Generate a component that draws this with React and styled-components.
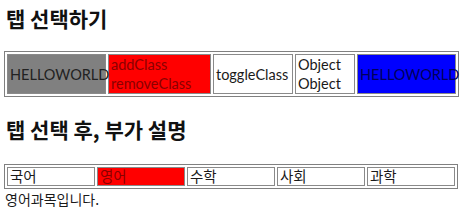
import React, { useState } from 'react';
import styled, { createGlobalStyle } from 'styled-components';

const GlobalStyle = createGlobalStyle`
  * {
    box-sizing: border-box;
  }
  body {
    margin: 0;
    background: #ffffff;
    color: #1a1a1a;
    font-family: Lato, 'Noto Sans CJK KR', sans-serif;
  }
`;

const Page = styled.div`
  padding: 5px 0 0 4px;
`;

const Heading = styled.h1`
  margin: ${props => props.$top || 0}px 0 0 2px;
  font-family: 'Noto Sans CJK KR', sans-serif;
  font-size: 21px;
  line-height: 26px;
  font-weight: 700;
  color: #111111;
`;

const Table = styled.table`
  margin-top: ${props => props.$top}px;
  width: 454px;
  border: 1px solid #808080;
  border-spacing: 2px;
  font-family: Lato, 'Noto Sans CJK KR', sans-serif;
  font-size: ${props => props.$size}px;
  line-height: ${props => props.$line}px;
  table-layout: fixed;
`;

const Cell = styled.td`
  width: ${props => props.$w}px;
  padding: 0 1px 0 2px;
  border: 1px solid #8a8a8a;
  vertical-align: middle;
  text-align: left;
  white-space: nowrap;
  background: ${props => props.$bg || '#ffffff'};
  color: ${props => props.$fg || '#1a1a1a'};
  cursor: pointer;
`;

const Note = styled.p`
  margin: 1px 0 0 1px;
  font-family: 'Noto Sans CJK KR', sans-serif;
  font-size: 14px;
  line-height: 19px;
  color: #1a1a1a;
`;

const subjects = ['국어', '영어', '수학', '사회', '과학'];

export default function App() {
  const [active, setActive] = useState(1);

  return (
    <>
      <GlobalStyle />
      <Page>
        <Heading>탭 선택하기</Heading>
        <Table $top={20} $line={19} $size={14.5}>
          <tbody>
            <tr>
              <Cell $w={99} $bg="#808080" $fg="#222222">HELLOWORLD</Cell>
              <Cell $w={103} $bg="#ff0000" $fg="#8a0000">addClass<br />removeClass</Cell>
              <Cell $w={80}>toggleClass</Cell>
              <Cell $w={60}>Object<br />Object</Cell>
              <Cell $w={99} $bg="#0000ff" $fg="#00005a">HELLOWORLD</Cell>
            </tr>
          </tbody>
        </Table>

        <Heading $top={19}>탭 선택 후, 부가 설명</Heading>
        <Table $top={22} $line={17} $size={14.5}>
          <tbody>
            <tr>
              {subjects.map((s, i) => (
                <Cell
                  key={s}
                  $w={88}
                  $bg={i === active ? '#ff0000' : '#ffffff'}
                  $fg={i === active ? '#8a0000' : '#1a1a1a'}
                  onClick={() => setActive(i)}
                >
                  {s}
                </Cell>
              ))}
            </tr>
          </tbody>
        </Table>
        <Note>{subjects[active]}과목입니다.</Note>
      </Page>
    </>
  );
}
